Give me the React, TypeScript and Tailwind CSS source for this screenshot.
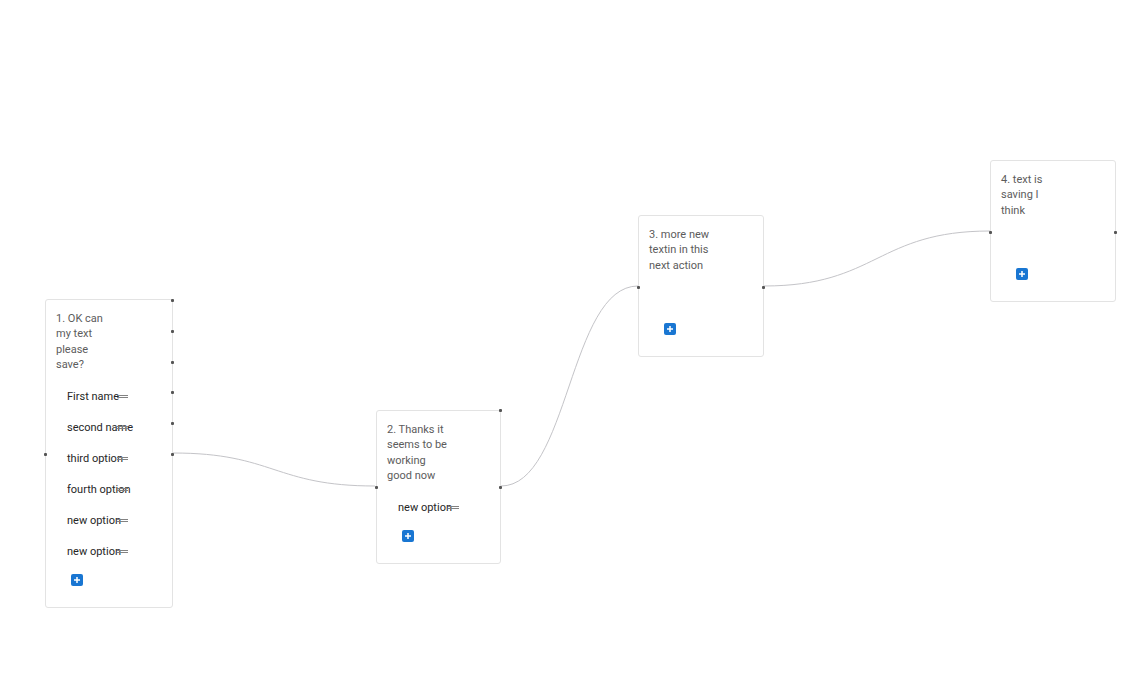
import React from "react";

type NodeProps = {
  x: number;
  y: number;
  w: number;
  title: string[];
  options: string[];
  right: number[];
  left: number;
};

function Handle({ side, top }: { side: "l" | "r"; top: number }) {
  return (
    <div
      className={
        "absolute w-[3px] h-[3px] bg-[#555] rounded-[1px] " +
        (side === "r" ? "right-[-2px]" : "left-[-2px]")
      }
      style={{ top: top - 1.5 }}
    />
  );
}

function Plus() {
  return (
    <div className="w-[12px] h-[12px] bg-[#1976d2] rounded-[2px] flex items-center justify-center">
      <svg width="8" height="8" viewBox="0 0 8 8">
        <path d="M4 1V7M1 4H7" stroke="#fff" strokeWidth="1.5" />
      </svg>
    </div>
  );
}

function FlowNode({ x, y, w, title, options, right, left }: NodeProps) {
  return (
    <div
      className="absolute bg-white border border-[#e3e3e3] rounded-[3px] pt-[10.5px] pb-[21px] pl-[10px] flex flex-col"
      style={{ left: x, top: y, width: w }}
    >
      <div className="flex flex-col text-[11px] leading-[15.5px] text-[#5c5c5c]">
        {title.map((t, i) => (
          <div key={i} className="whitespace-nowrap">
            {t}
          </div>
        ))}
      </div>
      {options.length > 0 ? (
        <div className="mt-[9.5px] -ml-[10px] flex flex-col">
          {options.map((o, i) => (
            <div
              key={i}
              className="relative h-[31px] pl-[21px] flex items-center text-[11px] text-[#262626] whitespace-nowrap"
            >
              {o}
              <div className="absolute left-[71px] top-[13px] w-[11px] h-[3px] border-t border-b border-[#828282]" />
            </div>
          ))}
        </div>
      ) : (
        <div className="h-[44px]" />
      )}
      <div className="mt-[6px] ml-[15px]">
        <Plus />
      </div>
      {right.map((t, i) => (
        <Handle key={i} side="r" top={t} />
      ))}
      <Handle side="l" top={left} />
    </div>
  );
}

export default function App() {
  return (
    <div
      className="relative w-[1129px] h-[673px] bg-white overflow-hidden"
      style={{ fontFamily: "Roboto, 'Liberation Sans', sans-serif" }}
    >
      <svg className="absolute inset-0" width="1129" height="673">
        <g fill="none" stroke="#c4c4c8" strokeWidth="1">
          <path d="M173 453 C274 453 274 486 375 486" />
          <path d="M501 486 C569 486 569 286 638 286" />
          <path d="M764 286 C877 286 877 231 990 231" />
        </g>
      </svg>
      <FlowNode
        x={45}
        y={299}
        w={128}
        title={["1. OK can", "my text", "please", "save?"]}
        options={["First name", "second name", "third option", "fourth option", "new option", "new option"]}
        right={[0, 31, 62, 92, 123, 154]}
        left={154}
      />
      <FlowNode
        x={376}
        y={410}
        w={125}
        title={["2. Thanks it", "seems to be", "working", "good now"]}
        options={["new option"]}
        right={[-1, 76]}
        left={76}
      />
      <FlowNode
        x={638}
        y={215}
        w={126}
        title={["3. more new", "textin in this", "next action"]}
        options={[]}
        right={[71]}
        left={71}
      />
      <FlowNode
        x={990}
        y={160}
        w={126}
        title={["4. text is", "saving I", "think"]}
        options={[]}
        right={[71]}
        left={71}
      />
    </div>
  );
}
